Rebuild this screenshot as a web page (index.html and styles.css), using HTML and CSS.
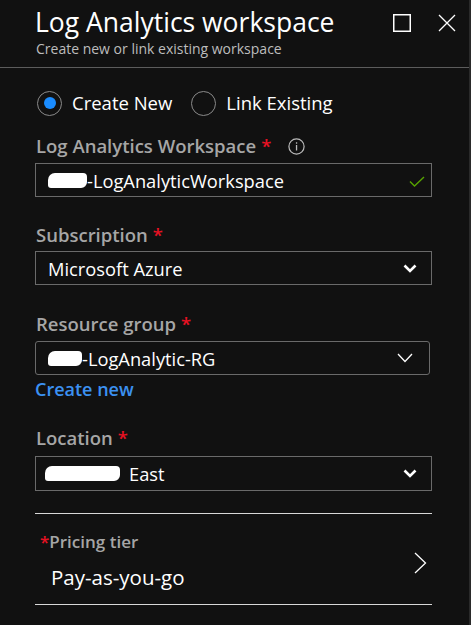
FILE: index.html
```html
<!DOCTYPE html>
<html lang="en">
<head>
<meta charset="utf-8">
<title>Log Analytics workspace</title>
<link rel="stylesheet" href="styles.css">
</head>
<body>
<div class="blade">
  <header class="head">
    <div class="titles">
      <h1 class="title">Log Analytics workspace</h1>
      <p class="subtitle">Create new or link existing workspace</p>
    </div>
    <div class="controls">
      <svg class="ctl" width="18" height="18" viewBox="0 0 18 18"><rect x="0.75" y="0.75" width="16.5" height="16.5" fill="none" stroke="#fff" stroke-width="1.5"/></svg>
      <svg class="ctl" width="18" height="18" viewBox="0 0 18 18"><path d="M1 1L17 17M17 1L1 17" stroke="#fff" stroke-width="1.3" fill="none"/></svg>
    </div>
  </header>
  <main class="form">
    <div class="radios">
      <div class="radio"><span class="dot on"></span><span class="rtext">Create New</span></div>
      <div class="radio"><span class="dot"></span><span class="rtext">Link Existing</span></div>
    </div>

    <div class="label l1">Log Analytics Workspace <span class="req">*</span>
      <svg class="info" width="17" height="17" viewBox="0 0 17 17"><circle cx="8.5" cy="8.5" r="7.6" fill="none" stroke="#bbb" stroke-width="1.2"/><rect x="7.9" y="7" width="1.3" height="5.5" fill="#bbb"/><rect x="7.9" y="4.3" width="1.3" height="1.4" fill="#bbb"/></svg>
    </div>
    <div class="box b1">
      <span class="val"><span class="blot w38"></span>-LogAnalyticWorkspace</span>
      <svg class="check" width="16" height="11" viewBox="0 0 16 11"><path d="M1 5.5L5.5 10L15 1" stroke="#57a300" stroke-width="1.4" fill="none"/></svg>
    </div>

    <div class="label l2">Subscription <span class="req">*</span></div>
    <div class="box b2">
      <span class="val">Microsoft Azure</span>
      <svg class="chev" width="14" height="9" viewBox="0 0 14 9"><path d="M1.5 1.5L7 7L12.5 1.5" stroke="#fff" stroke-width="2.6" fill="none"/></svg>
    </div>

    <div class="label l3">Resource group <span class="req">*</span></div>
    <div class="box b3 rounded">
      <span class="val"><span class="blot w34"></span>-LogAnalytic-RG</span>
      <svg class="chev thin" width="16" height="10" viewBox="0 0 16 10"><path d="M1 1L8 8.5L15 1" stroke="#fff" stroke-width="1.3" fill="none"/></svg>
    </div>
    <a class="link" href="#">Create new</a>

    <div class="label l4">Location <span class="req">*</span></div>
    <div class="box b4">
      <span class="val"><span class="blot w80 sp"></span>East</span>
      <svg class="chev" width="14" height="9" viewBox="0 0 14 9"><path d="M1.5 1.5L7 7L12.5 1.5" stroke="#fff" stroke-width="2.6" fill="none"/></svg>
    </div>

    <div class="tier">
      <div class="tier-text">
        <div class="tier-label"><span class="req">*</span>Pricing tier</div>
        <div class="tier-val">Pay-as-you-go</div>
      </div>
      <svg class="arrow" width="13" height="22" viewBox="0 0 13 22"><path d="M1 1L11.5 11L1 21" stroke="#fff" stroke-width="1.3" fill="none"/></svg>
    </div>
  </main>
</div>
</body>
</html>
```
FILE: styles.css
```css
html, body {
  margin: 0;
  padding: 0;
  background: #111111;
}
body {
  font-family: "Open Sans", "Noto Sans", sans-serif;
  color: #ffffff;
}
.blade {
  width: 469px;
  height: 625px;
  border-right: 2px solid #2a2a2a;
  box-sizing: content-box;
}
.head {
  display: flex;
  justify-content: space-between;
  align-items: flex-start;
  padding-left: 36px;
  box-sizing: border-box;
  height: 68px;
  border-bottom: 1px solid #5c5c5c;
}
.title {
  margin: 6px 0 0 -1px;
  font-size: 26.5px;
  line-height: 32px;
  font-weight: 400;
}
.subtitle {
  margin: 2px 0 0 0;
  font-size: 14px;
  line-height: 18px;
  color: #bdbdbd;
}
.controls {
  display: flex;
  gap: 27px;
  margin-top: 14px;
  margin-right: 13px;
}
.ctl { display: block; }

.form {
  width: 397px;
  margin-left: 35px;
}
.radios {
  display: flex;
  gap: 17px;
  margin-top: 22px;
  height: 26px;
  align-items: center;
}
.radio {
  display: flex;
  align-items: center;
  gap: 10px;
}
.dot {
  width: 25px;
  height: 25px;
  box-sizing: border-box;
  border: 1.5px solid #8a8a8a;
  border-radius: 50%;
  display: flex;
  align-items: center;
  justify-content: center;
  margin-left: 2px;
}
.dot.on::after {
  content: "";
  width: 12px;
  height: 12px;
  border-radius: 50%;
  background: #1a8cff;
}
.rtext {
  font-size: 18.5px;
  line-height: 24px;
}
.label {
  height: 24px;
  line-height: 24px;
  font-size: 18.5px;
  font-weight: 600;
  color: #a6a6a6;
  padding-left: 1px;
  display: flex;
  align-items: center;
  gap: 5px;
}
.req { color: #e81123; font-weight: 600; }
.info { margin-left: 12px; }
.l1 { margin-top: 18px; }
.l2 { margin-top: 26px; }
.l3 { margin-top: 27px; }
.l4 { margin-top: 25px; }

.box {
  height: 34px;
  box-sizing: border-box;
  border: 1px solid #6a6a6a;
  display: flex;
  align-items: center;
  justify-content: space-between;
  padding: 0 14px 0 12px;
}
.box.rounded { border-radius: 3px; width: 395px; padding-right: 16px; }
.b1 { margin-top: 5px; padding-right: 6px; }
.b2 { margin-top: 4px; }
.b3 { margin-top: 5px; }
.b4 { margin-top: 6px; height: 35px; }
.val {
  font-size: 18.3px;
  color: #fff;
  display: flex;
  align-items: center;
}
.blot {
  display: inline-block;
  height: 15px;
  background: #ffffff;
  border-radius: 7px 4px 6px 3px;
}
.w38 { width: 39px; }
.w34 { width: 34px; }
.w80 { width: 75px; margin-left: -3px; }
.sp { margin-right: 9px; }
.check { display: block; margin-top: 2px; }
.chev { display: block; }

.link {
  display: block;
  height: 24px;
  line-height: 24px;
  margin-top: 2px;
  color: #3c91f2;
  font-size: 18px;
  font-weight: 600;
  text-decoration: none;
}

.tier {
  margin-top: 22px;
  border-top: 1px solid #d8d8d8;
  border-bottom: 1px solid #d8d8d8;
  height: 92px;
  box-sizing: border-box;
  display: flex;
  justify-content: space-between;
  align-items: center;
  padding: 0 5px 0 5px;
}
.tier-text { padding-top: 2px; }
.tier-label {
  font-size: 17px;
  font-weight: 600;
  color: #a6a6a6;
  line-height: 24px;
}
.tier-val {
  font-size: 20.5px;
  line-height: 26px;
  margin-top: 10px;
  padding-left: 11px;
}
.arrow { display: block; margin-top: 8px; }
```
